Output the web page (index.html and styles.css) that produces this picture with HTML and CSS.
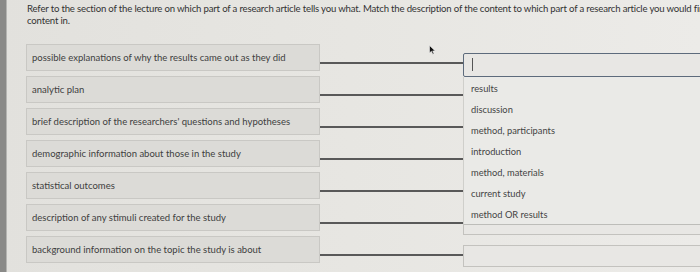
FILE: index.html
```html
<!DOCTYPE html>
<html lang="en">
<head>
<meta charset="utf-8">
<title>Matching question</title>
<link rel="stylesheet" href="styles.css">
</head>
<body>
<div class="frame">
  <div class="rail"></div>
  <main class="content">
    <p class="prompt">Refer to the section of the lecture on which part of a research article tells you what. Match the description of the content to which part of a research article you would find the content in.</p>
    <div class="rows">
      <div class="row">
        <div class="term">possible explanations of why the results came out as they did</div>
        <div class="connector"></div>
        <div class="answer">
          <div class="select active"><span class="caret"></span></div>
          <ul class="menu">
            <li>results</li>
            <li>discussion</li>
            <li>method, participants</li>
            <li>introduction</li>
            <li>method, materials</li>
            <li>current study</li>
            <li>method OR results</li>
          </ul>
        </div>
      </div>
      <div class="row">
        <div class="term">analytic plan</div>
        <div class="connector"></div>
        <div class="answer"><div class="select"></div></div>
      </div>
      <div class="row">
        <div class="term">brief description of the researchers' questions and hypotheses</div>
        <div class="connector"></div>
        <div class="answer"><div class="select"></div></div>
      </div>
      <div class="row">
        <div class="term">demographic information about those in the study</div>
        <div class="connector"></div>
        <div class="answer"><div class="select"></div></div>
      </div>
      <div class="row">
        <div class="term">statistical outcomes</div>
        <div class="connector"></div>
        <div class="answer"><div class="select"></div></div>
      </div>
      <div class="row">
        <div class="term">description of any stimuli created for the study</div>
        <div class="connector"></div>
        <div class="answer"><div class="select"></div></div>
      </div>
      <div class="row">
        <div class="term">background information on the topic the study is about</div>
        <div class="connector"></div>
        <div class="answer"><div class="select"></div></div>
      </div>
    </div>
  </main>
</div>
<svg class="pointer" width="7" height="10" viewBox="0 0 7 10" aria-hidden="true">
  <path d="M0.5 0.5 L0.5 8 L2.4 6.3 L3.8 9.3 L5 8.8 L3.7 5.9 L6.2 5.9 Z" fill="#111" stroke="#eee" stroke-width="0.6"/>
</svg>
</body>
</html>
```
FILE: styles.css
```css
html, body {
  margin: 0;
  padding: 0;
}
body {
  width: 700px;
  height: 272px;
  overflow: hidden;
  background: linear-gradient(to right, #e2e1dd 0%, #e7e6e2 50%, #ecebe8 100%);
  font-family: "Lato", "Liberation Sans", sans-serif;
  color: #3c3c3c;
  position: relative;
}
.frame {
  display: flex;
  height: 272px;
}
.rail {
  width: 6px;
  flex: none;
  background: #8a8a88;
  border-right: 1px solid #b4b4b1;
}
.content {
  flex: none;
  width: 760px;
  padding-left: 19px;
}
.prompt {
  margin: 3px 0 0 1px;
  width: 720px;
  font-size: 9.6px;
  letter-spacing: -0.18px;
  line-height: 12px;
  color: #333;
}
.rows {
  margin-top: 17px;
  display: flex;
  flex-direction: column;
}
.row {
  display: flex;
  align-items: flex-start;
  height: 32px;
}
.term {
  flex: none;
  box-sizing: border-box;
  width: 294px;
  height: 27px;
  padding-left: 5px;
  display: flex;
  align-items: center;
  background: #dcdbd7;
  border: 1px solid #c9c8c4;
  font-size: 9.5px;
  color: #404040;
}
.connector {
  flex: none;
  width: 143px;
  height: 2px;
  margin-top: 18px;
  background: #595959;
}
.answer {
  position: relative;
  flex: none;
  width: 260px;
  margin-top: 9px;
}
.select {
  box-sizing: border-box;
  height: 22px;
  border: 1px solid #c3c2be;
  background: #e8e7e4;
}
.select.active {
  height: 24px;
  border: 1px solid #5d6b7c;
  border-radius: 2px;
  padding: 4px 0 0 8px;
}
.caret {
  display: block;
  width: 1px;
  height: 13px;
  background: #555;
}
.menu {
  position: absolute;
  top: 24px;
  left: 0;
  right: 0;
  margin: 0;
  padding: 0;
  list-style: none;
  background: #eaeae7;
  border-left: 1px solid #cfcfcb;
  border-bottom: 1px solid #bdbdb9;
  z-index: 2;
}
.menu li {
  height: 21px;
  line-height: 23px;
  padding-left: 7px;
  font-size: 9.3px;
  color: #444;
}
.pointer {
  position: absolute;
  left: 429px;
  top: 45px;
}
```
